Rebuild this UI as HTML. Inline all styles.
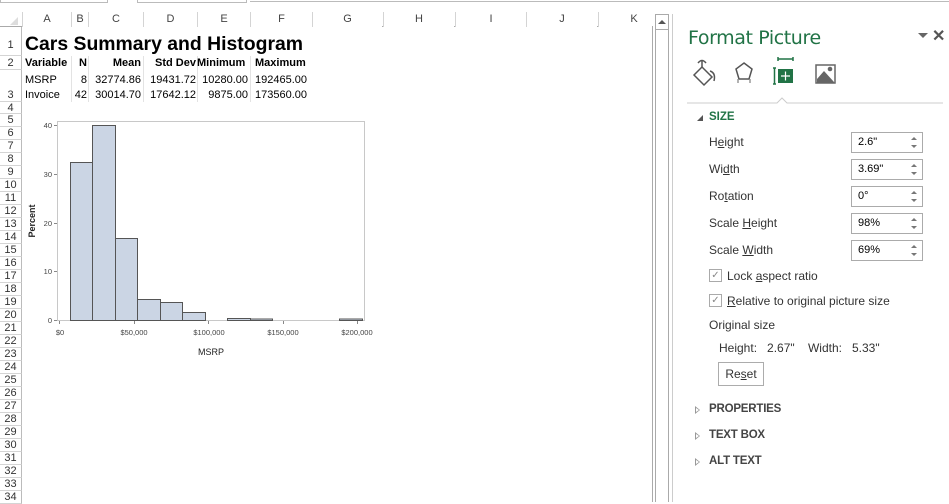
<!DOCTYPE html>
<html><head><meta charset="utf-8"><style>
*{margin:0;padding:0;box-sizing:border-box}
body{width:949px;height:502px;overflow:hidden;background:#fff;position:relative;font-family:"Liberation Sans",Arial,sans-serif;color:#000}
.a{position:absolute}
.hdr{position:absolute;top:11px;height:16px;font-size:11px;color:#444;text-align:center;line-height:16px;background:#fff}
.vl{position:absolute;width:1px;background:#d4d4d4}
.rn{position:absolute;left:0;width:22px;font-size:11px;color:#333;text-align:center;border-bottom:1px solid #d4d4d4;border-right:1px solid #bbb}
.t{position:absolute;font-size:11px;white-space:nowrap}
.b{font-weight:bold}
.r{text-align:right}
.pl{position:absolute;left:709px;color:#333;font-family:"Liberation Sans",sans-serif;font-size:12px;white-space:nowrap}
.inp{position:absolute;left:851px;width:72px;height:21px;border:1px solid #ababab;font-size:11px;padding:3px 6px;font-family:"Liberation Sans",sans-serif}
.inp:after{content:"";position:absolute;right:5px;top:4px;border:3px solid transparent;border-bottom:3px solid #777;border-top:0}
.inp:before{content:"";position:absolute;right:5px;bottom:4px;border:3px solid transparent;border-top:3px solid #777;border-bottom:0}
.sec{position:absolute;left:709px;font-size:11.5px;font-weight:bold;color:#444;font-family:"Liberation Sans",sans-serif;letter-spacing:-0.2px}
.tri{position:absolute;left:695px;width:0;height:0;border-left:5px solid #999;border-top:4px solid transparent;border-bottom:4px solid transparent}
.tri:after{content:"";position:absolute;left:-4px;top:-2px;border-left:3px solid #fff;border-top:2px solid transparent;border-bottom:2px solid transparent}
.cb{position:absolute;left:709px;width:13px;height:13px;border:1px solid #aaa;font-size:10px;color:#888;line-height:11px;text-align:center}
u{text-decoration:underline}
</style></head><body>
<div class="a" style="left:0;top:0;width:108px;height:3px;border:1px solid #bbb;border-top:0"></div>
<div class="a" style="left:137px;top:0;width:110px;height:3px;border:1px solid #bbb;border-top:0"></div>
<div class="a" style="left:250px;top:0;width:699px;height:2px;border-bottom:1px solid #bbb"></div>
<div class="a" style="left:0;top:26px;width:652px;height:1px;background:#aaa"></div>
<div class="a" style="left:10px;top:17px;width:0;height:0;border-left:8px solid transparent;border-bottom:8px solid #ddd"></div>
<div class="hdr" style="left:23px;width:48px">A</div>
<div class="hdr" style="left:72px;width:16px">B</div>
<div class="hdr" style="left:89px;width:54px">C</div>
<div class="hdr" style="left:144px;width:53px">D</div>
<div class="hdr" style="left:198px;width:52px">E</div>
<div class="hdr" style="left:251px;width:61px">F</div>
<div class="hdr" style="left:313px;width:69px">G</div>
<div class="hdr" style="left:384px;width:70px">H</div>
<div class="hdr" style="left:456px;width:70px">I</div>
<div class="hdr" style="left:527px;width:70px">J</div>
<div class="hdr" style="left:599px;width:70px">K</div>
<div class="vl" style="left:22px;top:12px;height:15px"></div>
<div class="vl" style="left:71px;top:12px;height:15px"></div>
<div class="vl" style="left:88px;top:12px;height:15px"></div>
<div class="vl" style="left:143px;top:12px;height:15px"></div>
<div class="vl" style="left:197px;top:12px;height:15px"></div>
<div class="vl" style="left:250px;top:12px;height:15px"></div>
<div class="vl" style="left:312px;top:12px;height:15px"></div>
<div class="vl" style="left:383px;top:12px;height:15px"></div>
<div class="vl" style="left:455px;top:12px;height:15px"></div>
<div class="vl" style="left:526px;top:12px;height:15px"></div>
<div class="vl" style="left:598px;top:12px;height:15px"></div>
<div class="vl" style="left:71px;top:56px;height:46px;background:#e3e3e3"></div>
<div class="vl" style="left:88px;top:56px;height:46px;background:#e3e3e3"></div>
<div class="vl" style="left:143px;top:56px;height:46px;background:#e3e3e3"></div>
<div class="vl" style="left:197px;top:56px;height:46px;background:#e3e3e3"></div>
<div class="vl" style="left:250px;top:56px;height:46px;background:#e3e3e3"></div>
<div class="a" style="left:652px;top:26px;width:1px;height:476px;background:#aaa"></div>
<div class="a" style="left:655px;top:14px;width:14px;height:488px;border:1px solid #aaa;border-bottom:0"></div>
<div class="a" style="left:656px;top:29px;width:12px;height:1px;background:#aaa"></div>
<div class="a" style="left:658px;top:20px;border-left:4px solid transparent;border-right:4px solid transparent;border-bottom:4px solid #555"></div>
<div class="a" style="left:672px;top:14px;width:1px;height:488px;background:#ccc"></div>
<div class="rn" style="top:27px;height:29px;line-height:36px">1</div>
<div class="rn" style="top:56px;height:14px;line-height:14px">2</div>
<div class="rn" style="top:70px;height:32px;line-height:50px">3</div>
<div class="rn" style="top:102px;height:12px;line-height:12px">4</div>
<div class="a" style="left:0;top:114px">
<div class="rn" style="top:0;height:13px;line-height:12px">5</div><div class="rn" style="top:13px;height:13px;line-height:12px">6</div><div class="rn" style="top:26px;height:13px;line-height:12px">7</div><div class="rn" style="top:39px;height:13px;line-height:12px">8</div><div class="rn" style="top:52px;height:13px;line-height:12px">9</div><div class="rn" style="top:65px;height:13px;line-height:12px">10</div><div class="rn" style="top:78px;height:13px;line-height:12px">11</div><div class="rn" style="top:91px;height:13px;line-height:12px">12</div><div class="rn" style="top:104px;height:13px;line-height:12px">13</div><div class="rn" style="top:117px;height:13px;line-height:12px">14</div><div class="rn" style="top:130px;height:13px;line-height:12px">15</div><div class="rn" style="top:143px;height:13px;line-height:12px">16</div><div class="rn" style="top:156px;height:13px;line-height:12px">17</div><div class="rn" style="top:169px;height:13px;line-height:12px">18</div><div class="rn" style="top:182px;height:13px;line-height:12px">19</div><div class="rn" style="top:195px;height:13px;line-height:12px">20</div><div class="rn" style="top:208px;height:13px;line-height:12px">21</div><div class="rn" style="top:221px;height:13px;line-height:12px">22</div><div class="rn" style="top:234px;height:13px;line-height:12px">23</div><div class="rn" style="top:247px;height:13px;line-height:12px">24</div><div class="rn" style="top:260px;height:13px;line-height:12px">25</div><div class="rn" style="top:273px;height:13px;line-height:12px">26</div><div class="rn" style="top:286px;height:13px;line-height:12px">27</div><div class="rn" style="top:299px;height:13px;line-height:12px">28</div><div class="rn" style="top:312px;height:13px;line-height:12px">29</div><div class="rn" style="top:325px;height:13px;line-height:12px">30</div><div class="rn" style="top:338px;height:13px;line-height:12px">31</div><div class="rn" style="top:351px;height:13px;line-height:12px">32</div><div class="rn" style="top:364px;height:13px;line-height:12px">33</div><div class="rn" style="top:377px;height:13px;line-height:12px">34</div>
</div>
<div class="t b" style="left:25px;top:33px;font-size:19.4px">Cars Summary and Histogram</div>
<div class="t b" style="left:25px;top:57px">Variable</div>
<div class="t b r" style="left:72px;top:57px;width:15px">N</div>
<div class="t b r" style="left:89px;top:57px;width:52px">Mean</div>
<div class="t b r" style="left:144px;top:57px;width:52px">Std Dev</div>
<div class="t b" style="left:197px;top:57px">Minimum</div>
<div class="t b" style="left:255px;top:57px">Maximum</div>
<div class="t" style="left:25px;top:74px">MSRP</div>
<div class="t r" style="left:72px;top:74px;width:15px">8</div>
<div class="t r" style="left:89px;top:74px;width:52px">32774.86</div>
<div class="t r" style="left:144px;top:74px;width:52px">19431.72</div>
<div class="t r" style="left:198px;top:74px;width:50px">10280.00</div>
<div class="t" style="left:255px;top:74px">192465.00</div>
<div class="t" style="left:25px;top:89px">Invoice</div>
<div class="t r" style="left:72px;top:89px;width:15px">42</div>
<div class="t r" style="left:89px;top:89px;width:52px">30014.70</div>
<div class="t r" style="left:144px;top:89px;width:52px">17642.12</div>
<div class="t r" style="left:198px;top:89px;width:50px">9875.00</div>
<div class="t" style="left:255px;top:89px">173560.00</div>
<svg class="a" style="left:0;top:0" width="380" height="370" font-family="Liberation Sans,sans-serif">
<rect x="57.5" y="121.5" width="307" height="199" fill="#fff" stroke="#c8c8c8"/>
<g fill="#cbd5e4" stroke="#555" stroke-width="1">
<rect x="70.5" y="162.5" width="22" height="158"/>
<rect x="92.5" y="125.5" width="23" height="195"/>
<rect x="115.5" y="238.5" width="22" height="82"/>
<rect x="137.5" y="299.5" width="23" height="21"/>
<rect x="160.5" y="302.5" width="22" height="18"/>
<rect x="182.5" y="312.5" width="23" height="8"/>
<rect x="227.5" y="318.5" width="23" height="2"/>
<rect x="250.5" y="319" width="22" height="1.5"/>
<rect x="339.5" y="319" width="23" height="1.5"/>
</g>
<g stroke="#888"><line x1="54" y1="125.5" x2="57" y2="125.5"/><line x1="54" y1="174.5" x2="57" y2="174.5"/><line x1="54" y1="223.5" x2="57" y2="223.5"/><line x1="54" y1="271.5" x2="57" y2="271.5"/><line x1="54" y1="320.5" x2="57" y2="320.5"/>
<line x1="59.5" y1="321" x2="59.5" y2="324"/><line x1="134.5" y1="321" x2="134.5" y2="324"/><line x1="208.5" y1="321" x2="208.5" y2="324"/><line x1="283.5" y1="321" x2="283.5" y2="324"/><line x1="357.5" y1="321" x2="357.5" y2="324"/></g>
<g font-size="7.5" fill="#444" text-anchor="end"><text x="52" y="128">40</text><text x="52" y="177">30</text><text x="52" y="226">20</text><text x="52" y="274">10</text><text x="52" y="323">0</text></g>
<g font-size="7.5" fill="#444" text-anchor="middle"><text x="60" y="335">$0</text><text x="134" y="335">$50,000</text><text x="209" y="335">$100,000</text><text x="283" y="335">$150,000</text><text x="357" y="335">$200,000</text></g>
<text x="211" y="355" font-size="9" fill="#222" text-anchor="middle">MSRP</text>
<text transform="translate(35,221) rotate(-90)" font-size="9" font-weight="bold" fill="#222" text-anchor="middle">Percent</text>
</svg>
<div class="a" style="left:688px;top:27px;font-size:19px;color:#217346;font-family:'DejaVu Sans',sans-serif;letter-spacing:-0.4px">Format Picture</div>
<div class="a" style="left:918px;top:33px;border-left:5px solid transparent;border-right:5px solid transparent;border-top:5px solid #666"></div>
<div class="a" style="left:932px;top:26px;font-size:16px;color:#555;font-weight:bold">✕</div>
<svg class="a" style="left:680px;top:55px" width="269" height="55">
<g fill="none" stroke="#555" stroke-width="1.5">
<path d="M14 20 L22 12 L32 22 L24 30 Z"/><path d="M22 12 L22 6 M18 8 Q22 3 26 8"/><path d="M30 16 Q36 18 34 26"/>
<path d="M64 8 L72 14 L69 24 L59 24 L56 14 Z"/><path d="M58 24 v4 M70 24 v4" stroke="#999"/>
<path d="M93 13 h3 M94.5 13 v16 M93 29 h3 M98 4 h15 M98 2 v4 M113 2 v4" stroke="#217346"/>
<rect x="136" y="10" width="19" height="18" stroke="#666"/>
</g>
<rect x="98" y="14" width="15" height="14" fill="#217346"/>
<path d="M101 21 h9 M105.5 16.5 v9" stroke="#fff" stroke-width="1.2"/>
<path d="M137 28 L137 24 L144 16 L154 27 L154 28 Z" fill="#666"/><circle cx="150" cy="14" r="2.3" fill="#666"/>
<path d="M7 48 H97 L102 43 L107 48 H263" fill="none" stroke="#ccc"/>
</svg>
<div class="a" style="left:697px;top:115px;border-left:6px solid transparent;border-bottom:6px solid #555"></div>
<div class="a" style="left:709px;top:111px;font-size:11.5px;font-weight:bold;color:#217346;font-family:'Liberation Sans',sans-serif">SIZE</div>
<div class="pl" style="top:135px">H<u>e</u>ight</div>
<div class="pl" style="top:162px">Wi<u>d</u>th</div>
<div class="pl" style="top:189px">Ro<u>t</u>ation</div>
<div class="pl" style="top:216px">Scale <u>H</u>eight</div>
<div class="pl" style="top:243px">Scale <u>W</u>idth</div>
<div class="inp" style="top:132px">2.6"</div>
<div class="inp" style="top:159px">3.69"</div>
<div class="inp" style="top:186px">0°</div>
<div class="inp" style="top:213px">98%</div>
<div class="inp" style="top:240px">69%</div>
<div class="cb" style="top:269px">✓</div>
<div class="pl" style="left:727px;top:269px">Lock <u>a</u>spect ratio</div>
<div class="cb" style="top:294px">✓</div>
<div class="pl" style="left:727px;top:294px"><u>R</u>elative to original picture size</div>
<div class="pl" style="top:318px">Original size</div>
<div class="pl" style="left:719px;top:341px">Height:&nbsp;&nbsp; 2.67"&nbsp;&nbsp;&nbsp; Width:&nbsp;&nbsp; 5.33"</div>
<div class="a" style="left:718px;top:362px;width:46px;height:24px;border:1px solid #acacac;font-size:12px;font-family:'Liberation Sans',sans-serif;color:#333;text-align:center;line-height:22px">Re<u>s</u>et</div>
<div class="tri" style="top:406px"></div><div class="sec" style="top:403px">PROPERTIES</div>
<div class="tri" style="top:432px"></div><div class="sec" style="top:429px">TEXT BOX</div>
<div class="tri" style="top:458px"></div><div class="sec" style="top:455px">ALT TEXT</div>
</body></html>
